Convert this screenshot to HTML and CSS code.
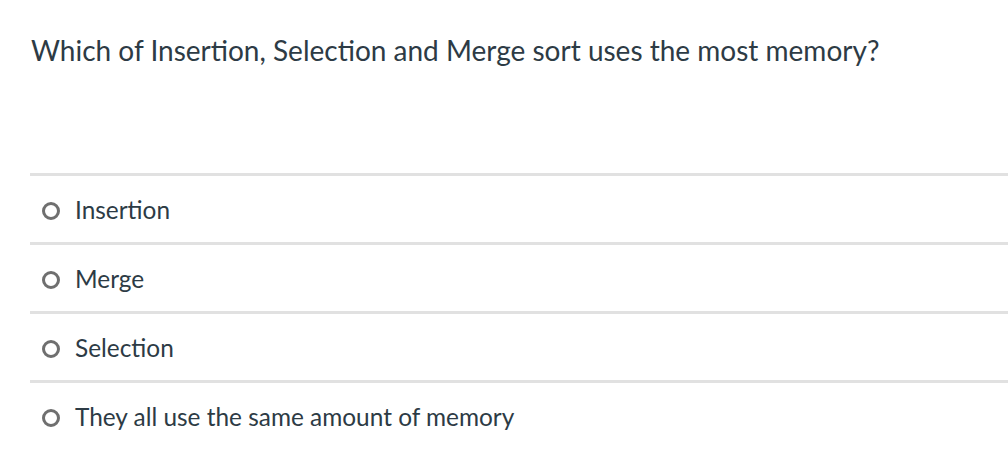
FILE: index.html
```html
<!DOCTYPE html>
<html>
<head>
<meta charset="utf-8">
<link rel="stylesheet" href="styles.css">
</head>
<body>
<div class="quiz">
  <p class="question">Which of Insertion, Selection and Merge sort uses the most memory?</p>
  <div class="answers">
    <label class="answer"><span class="radio"></span><span class="label">Insertion</span></label>
    <label class="answer"><span class="radio"></span><span class="label">Merge</span></label>
    <label class="answer"><span class="radio"></span><span class="label">Selection</span></label>
    <label class="answer"><span class="radio"></span><span class="label">They all use the same amount of memory</span></label>
  </div>
</div>
</body>
</html>
```
FILE: styles.css
```css
html, body {
  margin: 0;
  padding: 0;
  background: #ffffff;
}
body {
  font-family: Lato, "Open Sans", sans-serif;
  color: #2d3b45;
}
.quiz {
  padding-left: 30px;
}
.question {
  margin: 0;
  padding: 32px 0 0 1px;
  font-size: 28px;
  line-height: 36px;
  height: 141px;
}
.answers {
  display: flex;
  flex-direction: column;
}
.answer {
  display: flex;
  align-items: center;
  height: 66px;
  border-top: 3px solid #e1e1e1;
  padding-left: 12px;
}
.radio {
  box-sizing: border-box;
  width: 18px;
  height: 18px;
  margin-top: 3px;
  border: 3px solid #6f6f6f;
  border-radius: 50%;
  flex: none;
}
.label {
  margin-left: 15px;
  margin-top: 2px;
  font-size: 24.4px;
  line-height: 30px;
}
```
